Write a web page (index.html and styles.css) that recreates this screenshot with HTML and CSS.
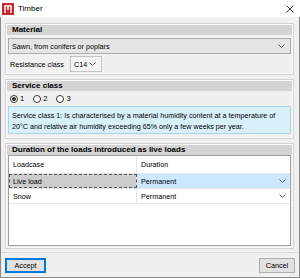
FILE: index.html
```html
<!DOCTYPE html>
<html lang="en">
<head>
    <meta charset="UTF-8">
    <title>Timber</title>
    <link rel="stylesheet" href="styles.css">
</head>
<body>
    <div class="window">
        <div class="titlebar">
            <svg class="app-icon" width="12" height="12" viewBox="0 0 12 12">
                <rect width="12" height="12" fill="#c42b30"/>
                <path d="M3 10V3h6v7M6 3v4" stroke="#fff" stroke-width="1.4" fill="none"/>
            </svg>
            <span class="title">Timber</span>
            <svg class="close" width="8" height="8" viewBox="0 0 8 8">
                <path d="M0.5 0.5l7 7M7.5 0.5l-7 7" stroke="#3a3a3a" stroke-width="1"/>
            </svg>
        </div>

        <div class="content">
            <!-- Material -->
            <div class="group">
                <div class="group-head">Material</div>
                <div class="combo combo-wide">
                    <span>Sawn, from conifers or poplars</span>
                    <svg class="chev" width="7" height="4" viewBox="0 0 7 4"><path d="M0.5 0.5l3 3l3-3" stroke="#606060" fill="none"/></svg>
                </div>
                <div class="field-row">
                    <label>Resistance class</label>
                    <div class="combo combo-small">
                        <span>C14</span>
                        <svg class="chev" width="7" height="4" viewBox="0 0 7 4"><path d="M0.5 0.5l3 3l3-3" stroke="#606060" fill="none"/></svg>
                    </div>
                </div>
            </div>

            <!-- Service class -->
            <div class="group">
                <div class="group-head">Service class</div>
                <div class="radios">
                    <span class="radio checked"></span><span class="radio-label">1</span>
                    <span class="radio"></span><span class="radio-label">2</span>
                    <span class="radio"></span><span class="radio-label">3</span>
                </div>
                <div class="info">
                    Service class 1: Is characterised by a material humidity content at a temperature of<br>
                    20°C and relative air humidity exceeding 65% only a few weeks per year.
                </div>
            </div>

            <!-- Durations -->
            <div class="group group-grid">
                <div class="group-head">Duration of the loads introduced as live loads</div>
                <div class="grid">
                    <div class="grid-row grid-header">
                        <div class="cell col-case">Loadcase</div>
                        <div class="cell col-dur">Duration</div>
                    </div>
                    <div class="grid-row">
                        <div class="cell col-case focused">Live load</div>
                        <div class="cell col-dur selected">Permanent
                            <svg class="chev" width="7" height="4" viewBox="0 0 7 4"><path d="M0.5 0.5l3 3l3-3" stroke="#606060" fill="none"/></svg>
                        </div>
                    </div>
                    <div class="grid-row">
                        <div class="cell col-case">Snow</div>
                        <div class="cell col-dur">Permanent
                            <svg class="chev" width="7" height="4" viewBox="0 0 7 4"><path d="M0.5 0.5l3 3l3-3" stroke="#606060" fill="none"/></svg>
                        </div>
                    </div>
                </div>
            </div>
        </div>

        <div class="footer">
            <button class="btn btn-default">Accept</button>
            <button class="btn btn-cancel">Cancel</button>
        </div>
    </div>
</body>
</html>
```

FILE: styles.css
```css
body {
    margin: 0;
    padding: 0;
    font-family: 'Liberation Sans', Arial, sans-serif;
    font-size: 7.2px;
    color: #000;
    background: #fff;
}
.window {
    width: 300px;
    height: 278px;
    box-sizing: border-box;
    display: flex;
    flex-direction: column;
    background: #f0f0f0;
    border: 1px solid #8a8a8a;
    border-top: none;
}
.titlebar {
    height: 17px;
    flex: none;
    display: flex;
    align-items: center;
    background: #fff;
    margin: 0 -1px;
    padding: 0 6px 0 2px;
}
.app-icon {
    flex: none;
    margin-top: 1px;
}
.title {
    font-size: 8px;
    margin-left: 4px;
    flex: 1;
}
.close {
    flex: none;
}
.content {
    flex: 1;
    display: flex;
    flex-direction: column;
    gap: 4px;
    padding: 6px 5px 0 4px;
}
.group {
    border: 1px solid #d3d3d3;
    box-shadow: inset 0 0 0 1px #fafafa;
    padding: 1px;
    display: flex;
    flex-direction: column;
}
.group-head {
    height: 10px;
    line-height: 10px;
    background: #d4d4d4;
    font-weight: bold;
    font-size: 8px;
    padding-left: 5px;
}
.combo {
    height: 16px;
    box-sizing: border-box;
    display: flex;
    align-items: center;
    justify-content: space-between;
    border: 1px solid #adadad;
    padding: 0 5px 0 3px;
}
.combo-wide {
    background: #e5e5e5;
    margin: 3px 1px 0 1px;
}
.field-row {
    display: flex;
    align-items: center;
    gap: 6px;
    margin: 2px 0 1px 3px;
}
.combo-small {
    width: 32px;
    background: #f4f4f4;
    border-color: #c4c4c4;
}
.radios {
    display: flex;
    align-items: center;
    height: 15px;
    padding-left: 3px;
}
.radio {
    width: 8px;
    height: 8px;
    box-sizing: border-box;
    border: 1px solid #333;
    border-radius: 50%;
    background: #fff;
    position: relative;
}
.radio.checked::after {
    content: '';
    position: absolute;
    left: 1px;
    top: 1px;
    width: 4px;
    height: 4px;
    border-radius: 50%;
    background: #333;
}
.radio-label {
    font-size: 7.6px;
    margin: 0 9px 0 2px;
}
.info {
    height: 28px;
    box-sizing: border-box;
    margin: 0 1px 3px 1px;
    padding: 4px 3px 0 3px;
    line-height: 10.5px;
    background: #d9f0fa;
    border: 1px solid #a9d4e6;
}
.group-grid {
    flex: 1;
}
.grid {
    flex: 1;
    background: #fff;
    border: 1px solid #a0a0a0;
    margin: 0 1px 1px 1px;
}
.grid-row {
    display: flex;
    height: 14px;
    border-bottom: 1px solid #e6e6e6;
}
.grid-header {
    height: 17px;
}
.cell {
    display: flex;
    align-items: center;
    padding-left: 4px;
    box-sizing: border-box;
}
.col-case {
    width: 128px;
    border-right: 1px solid #e6e6e6;
}
.col-dur {
    flex: 1;
    justify-content: space-between;
    padding-right: 4px;
}
.focused {
    background: #cccccc;
    outline: 1px dashed #555;
    outline-offset: -1px;
}
.selected {
    background: #cce8ff;
}
.footer {
    flex: none;
    height: 24px;
    display: flex;
    justify-content: space-between;
    align-items: center;
    padding: 0 4px 0 4px;
    border-top: 1px solid #dadada;
    margin-top: 3px;
}
.btn {
    font-family: 'Liberation Sans', Arial, sans-serif;
    font-size: 7.2px;
    height: 15px;
    padding: 0;
    background: #e1e1e1;
    border: 1px solid #adadad;
    color: #000;
}
.btn-default {
    width: 41px;
    border-color: #0078d7;
    box-shadow: inset 0 0 0 1px #0078d7;
}
.btn-cancel {
    width: 36px;
}
```
